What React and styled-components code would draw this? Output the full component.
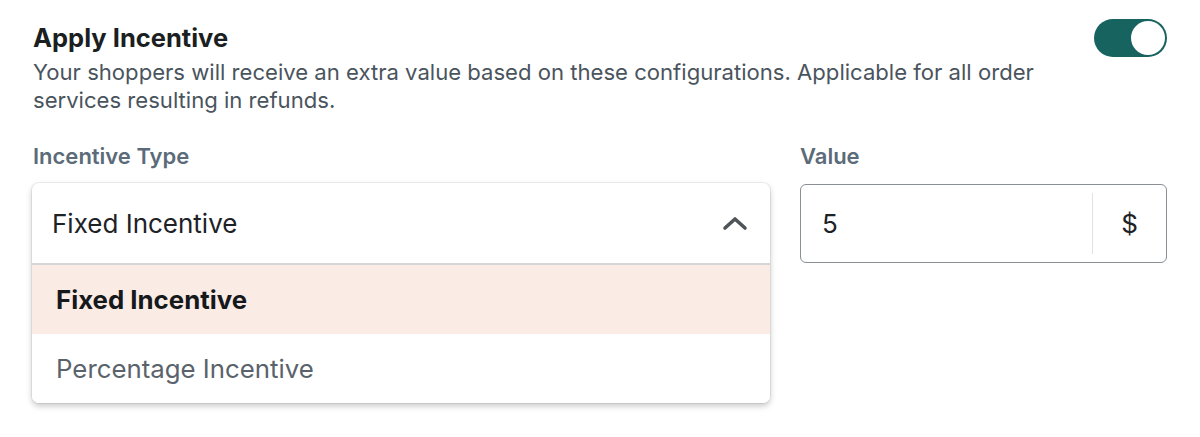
import React from "react";
import styled, { createGlobalStyle } from "styled-components";

const Global = createGlobalStyle`
  html, body { margin: 0; padding: 0; background: #ffffff; }
  body { font-family: Inter, "Liberation Sans", Arial, sans-serif; -webkit-font-smoothing: antialiased; }
  * { box-sizing: border-box; }
`;

const Page = styled.div`
  width: 1200px;
  height: 437px;
  padding: 19px 33px 0 33px;
  background: #fff;
`;

const Header = styled.div`
  display: flex;
  align-items: center;
  justify-content: space-between;
`;

const Title = styled.h2`
  margin: 0;
  font-size: 25.5px;
  line-height: 30px;
  font-weight: 700;
  color: #1b1f22;
`;

const Toggle = styled.div`
  width: 73px;
  height: 38px;
  border-radius: 19px;
  background: #17635f;
  display: flex;
  align-items: center;
  justify-content: flex-end;
  padding: 2px;
`;

const Knob = styled.div`
  width: 34px;
  height: 34px;
  border-radius: 50%;
  background: #fff;
`;

const Description = styled.p`
  margin: 1px 0 0 0;
  font-size: 22.1px;
  line-height: 28px;
  color: #4a545d;
  max-width: 1045px;
`;

const Fields = styled.div`
  display: flex;
  gap: 30px;
  margin-top: 30px;
`;

const Field = styled.div`
  display: flex;
  flex-direction: column;
  width: ${(p) => p.$width}px;
`;

const Label = styled.label`
  font-size: 22px;
  font-weight: 600;
  color: #5b6b79;
  line-height: 24px;
  margin-bottom: 15px;
`;

const Dropdown = styled.div`
  border-radius: 7px;
  background: #fff;
  box-shadow: 0 0 0 1px rgba(0, 0, 0, 0.06), 0 3px 6px rgba(0, 0, 0, 0.22);
  overflow: hidden;
  margin-left: -1px;
`;

const Trigger = styled.div`
  height: 82px;
  display: flex;
  align-items: center;
  justify-content: space-between;
  padding: 0 22px 0 20px;
  font-size: 26px;
  color: #1d2226;
  border-bottom: 2px solid #d6d6d6;
`;

const Option = styled.div`
  height: 69px;
  display: flex;
  align-items: center;
  padding: 0 24px;
  font-size: 25.8px;
  font-weight: ${(p) => (p.$selected ? 700 : 400)};
  color: ${(p) => (p.$selected ? "#16191c" : "#5a636c")};
  background: ${(p) => (p.$selected ? "#fbebe5" : "#ffffff")};
`;

const InputBox = styled.div`
  height: 79px;
  margin-top: 1px;
  border: 1.5px solid #8a8f93;
  border-radius: 6px;
  display: flex;
  align-items: stretch;
`;

const InputValue = styled.div`
  flex: 1;
  display: flex;
  align-items: center;
  padding-left: 21px;
  font-size: 26px;
  color: #1d2226;
`;

const Suffix = styled.div`
  width: 74px;
  display: flex;
  align-items: center;
  justify-content: center;
  font-size: 26px;
  color: #1d2226;
  margin: 8px 0;
  border-left: 1px solid #e2e2e2;
`;

const Chevron = () => (
  <svg width="26" height="16" viewBox="0 0 26 16" fill="none">
    <path d="M3 13 L13 4 L23 13" stroke="#4f5458" strokeWidth="3.6" strokeLinecap="round" strokeLinejoin="round" />
  </svg>
);

export default function App() {
  return (
    <Page>
      <Global />
      <Header>
        <Title>Apply Incentive</Title>
        <Toggle>
          <Knob />
        </Toggle>
      </Header>
      <Description>
        Your shoppers will receive an extra value based on these configurations. Applicable for all order
        services resulting in refunds.
      </Description>
      <Fields>
        <Field $width={737}>
          <Label>Incentive Type</Label>
          <Dropdown>
            <Trigger>
              <span>Fixed Incentive</span>
              <Chevron />
            </Trigger>
            <Option $selected>Fixed Incentive</Option>
            <Option>Percentage Incentive</Option>
          </Dropdown>
        </Field>
        <Field $width={367}>
          <Label>Value</Label>
          <InputBox>
            <InputValue>5</InputValue>
            <Suffix>$</Suffix>
          </InputBox>
        </Field>
      </Fields>
    </Page>
  );
}
